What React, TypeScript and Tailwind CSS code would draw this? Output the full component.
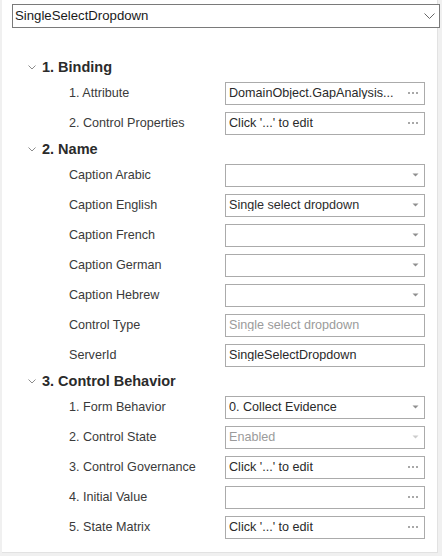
import React from 'react';

type Kind = 'dropdown' | 'ellipsis' | 'text';

interface Row {
  label: string;
  value?: string;
  kind: Kind;
  disabled?: boolean;
}

interface Section {
  title: string;
  rows: Row[];
}

const sections: Section[] = [
  {
    title: '1. Binding',
    rows: [
      { label: '1. Attribute', value: 'DomainObject.GapAnalysis...', kind: 'ellipsis' },
      { label: '2. Control Properties', value: "Click '...' to edit", kind: 'ellipsis' },
    ],
  },
  {
    title: '2. Name',
    rows: [
      { label: 'Caption Arabic', kind: 'dropdown' },
      { label: 'Caption English', value: 'Single select dropdown', kind: 'dropdown' },
      { label: 'Caption French', kind: 'dropdown' },
      { label: 'Caption German', kind: 'dropdown' },
      { label: 'Caption Hebrew', kind: 'dropdown' },
      { label: 'Control Type', value: 'Single select dropdown', kind: 'text', disabled: true },
      { label: 'ServerId', value: 'SingleSelectDropdown', kind: 'text' },
    ],
  },
  {
    title: '3. Control Behavior',
    rows: [
      { label: '1. Form Behavior', value: '0. Collect Evidence', kind: 'dropdown' },
      { label: '2. Control State', value: 'Enabled', kind: 'dropdown', disabled: true },
      { label: '3. Control Governance', value: "Click '...' to edit", kind: 'ellipsis' },
      { label: '4. Initial Value', kind: 'ellipsis' },
      { label: '5. State Matrix', value: "Click '...' to edit", kind: 'ellipsis' },
    ],
  },
];

function SmallArrow({ disabled }: { disabled?: boolean }) {
  return (
    <svg width="7" height="4" viewBox="0 0 7 4" className="shrink-0">
      <polygon points="0.5,0.5 6.5,0.5 3.5,3.5" fill={disabled ? '#cccccc' : '#8f8f8f'} />
    </svg>
  );
}

function Dots() {
  return (
    <svg width="11" height="2" viewBox="0 0 11 2" className="shrink-0">
      <rect x="0" y="0" width="2" height="2" fill="#a8a8a8" />
      <rect x="4" y="0" width="2" height="2" fill="#a8a8a8" />
      <rect x="8" y="0" width="2" height="2" fill="#a8a8a8" />
    </svg>
  );
}

function Field({ row }: { row: Row }) {
  return (
    <div className="w-[200px] h-[23px] border border-[#ababab] bg-white flex items-center pl-[3px] pr-[5px]">
      <span
        className={`flex-1 truncate leading-none ${row.disabled ? 'text-[#9b9b9b]' : 'text-[#2a2a2a]'}`}
      >
        {row.value ?? ''}
      </span>
      {row.kind === 'dropdown' && <SmallArrow disabled={row.disabled} />}
      {row.kind === 'ellipsis' && <Dots />}
    </div>
  );
}

export default function App() {
  return (
    <div
      className="w-[442px] h-[556px] bg-[#f0f0f0] text-[12.6px]"
      style={{ fontFamily: '"Liberation Sans", Arial, sans-serif' }}
    >
      <div className="ml-[2px] w-[436px] h-[553px] bg-white border-r border-b border-[#e2e2e2]">
        {/* Top combobox */}
        <div className="pt-[4px] pl-[10px] mr-[-3px]">
          <div className="h-[24px] border border-[#7a7a7a] bg-white flex items-center pl-[2px] pr-[4px]">
            <span className="flex-1 text-[13.2px] text-[#1a1a1a] leading-none">SingleSelectDropdown</span>
            <svg width="11" height="6" viewBox="0 0 11 6">
              <polyline points="0.5,0.5 5.5,5.5 10.5,0.5" fill="none" stroke="#666666" strokeWidth="1" />
            </svg>
          </div>
        </div>

        <div className="pt-[28px]">
          {sections.map((section) => (
            <div key={section.title}>
              <div className="h-[22px] flex items-center pl-[26px]">
                <svg width="8" height="5" viewBox="0 0 8 5" className="mr-[6px]">
                  <polyline points="0.5,0.5 4,4 7.5,0.5" fill="none" stroke="#8c8c8c" strokeWidth="1" />
                </svg>
                <span className="font-bold text-[14.5px] text-[#2b2b2b] leading-none">{section.title}</span>
              </div>
              {section.rows.map((row) => (
                <div key={row.label} className="h-[30px] flex items-center">
                  <span className="w-[223px] pl-[67px] text-[#3a3a3a] leading-none">{row.label}</span>
                  <Field row={row} />
                </div>
              ))}
            </div>
          ))}
        </div>
      </div>
    </div>
  );
}
